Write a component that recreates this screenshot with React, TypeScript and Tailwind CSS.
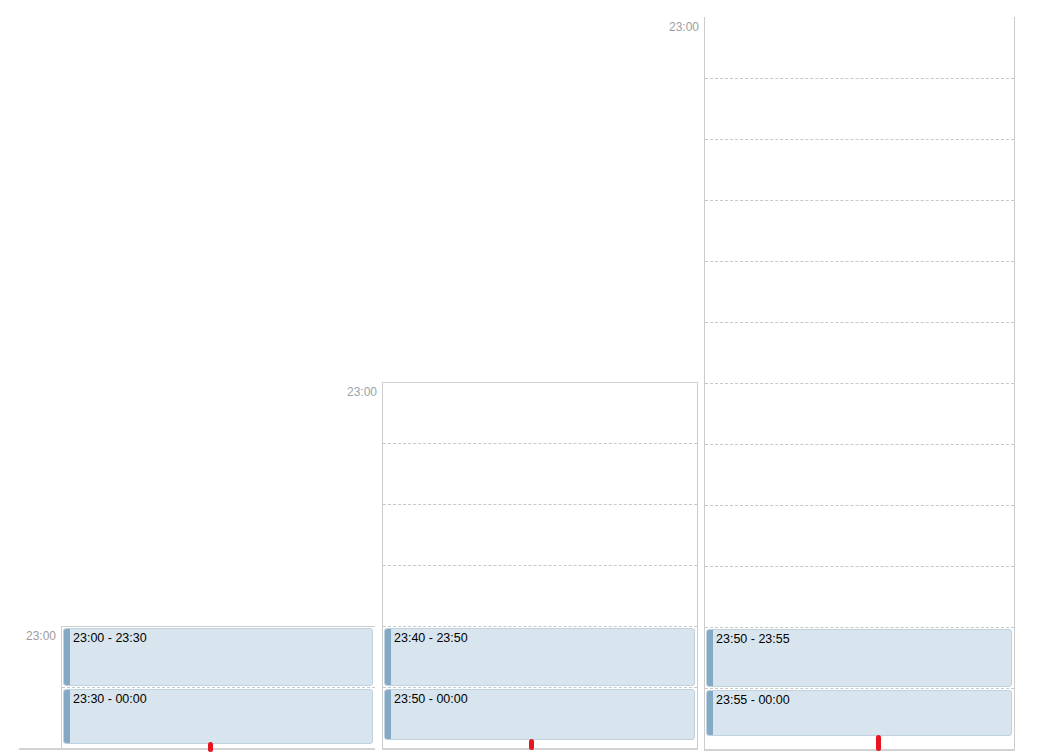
type Ev = { label: string; h: string };

const font = { fontFamily: '"Liberation Sans", Arial, sans-serif' };

function EventBox({ label, h }: Ev) {
  return (
    <div
      className={`ml-[1px] mr-[2px] mt-[1px] ${h} flex rounded-[3px] border border-[#bfd2df] bg-[#d9e5ee] overflow-hidden`}
    >
      <div className="w-[6px] shrink-0 bg-[#84a9c4]" />
      <div className="pl-[3px] pt-[1px] text-[12.5px] leading-4 text-black">{label}</div>
    </div>
  );
}

function Row({ first, solid, children }: { first?: boolean; solid?: boolean; children?: React.ReactNode }) {
  const line = first && !solid ? 'border-t-transparent' : solid ? 'border-t-[#cfcfcf] border-solid' : 'border-t-[#c8c8c8] border-dashed';
  return <div className={`h-[61px] border-t ${line}`}>{children}</div>;
}

export default function App() {
  return (
    <div className="w-[1046px] h-[755px] bg-white flex items-end pl-[19px] pb-[4px] overflow-hidden" style={font}>
      {/* panel 1: 30 min slots */}
      <div className="flex mb-[1px]">
        <div className="w-[42px] pr-[5px] pt-[2px] text-right text-[12px] leading-4 text-[#a09a98] border-b-2 border-[#d2d2d2]">
          23:00
        </div>
        <div className="relative w-[314px] border-l border-l-[#d0d0d0] border-b-2 border-b-[#d2d2d2]">
          <Row solid>
            <EventBox label="23:00 - 23:30" h="h-[58px]" />
          </Row>
          <Row>
            <EventBox label="23:30 - 00:00" h="h-[55px]" />
          </Row>
          <span className="absolute left-[146px] top-[116px] w-[5px] h-[10px] rounded-full bg-[#e8141f]" />
        </div>
      </div>

      {/* panel 2: 10 min slots */}
      <div className="flex -ml-[29px] mb-[1px]">
        <div className="w-[36px] pr-[5px] pt-[2px] text-right text-[12px] leading-4 text-[#9aa3aa]">23:00</div>
        <div className="relative w-[316px] border-x border-x-[#cccccc] border-b-2 border-b-[#d2d2d2]">
          <Row solid />
          <Row />
          <Row />
          <Row />
          <Row>
            <EventBox label="23:40 - 23:50" h="h-[58px]" />
          </Row>
          <Row>
            <EventBox label="23:50 - 00:00" h="h-[51px]" />
          </Row>
          <span className="absolute left-[146px] top-[357px] w-[5px] h-[11px] rounded-full bg-[#e8141f]" />
        </div>
      </div>

      {/* panel 3: 5 min slots */}
      <div className="flex -ml-[30px]">
        <div className="w-[36px] pr-[5px] pt-[2px] text-right text-[12px] leading-4 text-[#9a9fa3]">23:00</div>
        <div className="relative w-[311px] border-x border-x-[#cccccc] border-b-2 border-b-[#d2d2d2]">
          <Row first />
          {Array.from({ length: 9 }).map((_, i) => (
            <Row key={i} />
          ))}
          <Row>
            <EventBox label="23:50 - 23:55" h="h-[58px]" />
          </Row>
          <Row>
            <EventBox label="23:55 - 00:00" h="h-[46px]" />
          </Row>
          <span className="absolute left-[171px] top-[718px] w-[5px] h-[16px] rounded-full bg-[#e8141f]" />
        </div>
      </div>
    </div>
  );
}
